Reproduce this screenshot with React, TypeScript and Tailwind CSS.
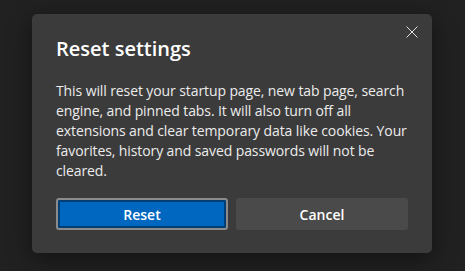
import React from 'react';

const App: React.FC = () => {
  return (
    <div
      className="w-[465px] h-[271px] bg-[#212121] pt-[14px] pl-[32px]"
      style={{ fontFamily: '"Open Sans", "Noto Sans", sans-serif' }}
    >
      {/* Dialog */}
      <div className="relative w-[400px] h-[239px] bg-[#3b3b3b] rounded-[5px] shadow-[0_6px_24px_rgba(0,0,0,0.45)] px-6 pt-[21px]">
        <button className="absolute top-[12px] right-[14px] w-3 h-3 text-[#e0e0e0]" aria-label="Close">
          <svg viewBox="0 0 12 12" width="12" height="12" fill="none" stroke="currentColor" strokeWidth="1">
            <path d="M0.5 0.5L11.5 11.5M11.5 0.5L0.5 11.5" />
          </svg>
        </button>

        <h1 className="text-[20px] leading-[28px] font-semibold text-white">Reset settings</h1>

        <p className="mt-[18px] text-[14px] leading-[20px] text-[#ececec] tracking-[-0.1px]">
          This will reset your startup page, new tab page, search engine, and pinned tabs. It will also turn off all
          extensions and clear temporary data like cookies. Your favorites, history and saved passwords will not be
          cleared.
        </p>

        <div className="mt-[17px] flex gap-2">
          <button className="w-[172px] h-8 rounded-[3px] border-2 border-[#8b8b8b] bg-[#0067c0] shadow-[inset_0_0_0_2px_#003e73] text-[14px] font-semibold text-white">
            Reset
          </button>
          <button className="w-[172px] h-8 rounded-[3px] bg-[#4a4a4a] text-[14px] font-semibold text-white">
            Cancel
          </button>
        </div>
      </div>
    </div>
  );
};

export default App;
